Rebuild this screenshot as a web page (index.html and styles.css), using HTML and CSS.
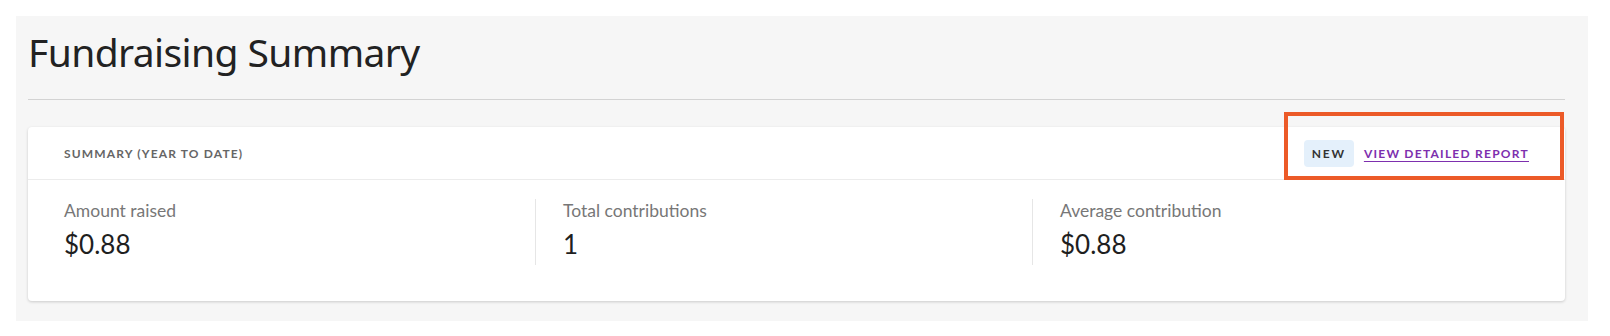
FILE: index.html
```html
<!DOCTYPE html>
<html lang="en">

<head>
    <meta charset="UTF-8" />
    <meta name="viewport" content="width=device-width, initial-scale=1.0" />
    <title>Fundraising Summary</title>
    <link rel="stylesheet" href="styles.css">
</head>

<body>
    <main class="panel">
        <header class="page-header">
            <h1>Fundraising Summary</h1>
        </header>

        <section class="card">
            <div class="card-head">
                <h2 class="card-title">Summary (year to date)</h2>
                <div class="card-actions">
                    <span class="badge">New</span>
                    <a href="#" class="report-link">View detailed report</a>
                </div>
                <div class="highlight"></div>
            </div>
            <div class="stats">
                <div class="stat">
                    <p class="stat-label">Amount raised</p>
                    <p class="stat-value">$0.88</p>
                </div>
                <div class="stat">
                    <p class="stat-label">Total contributions</p>
                    <p class="stat-value">1</p>
                </div>
                <div class="stat">
                    <p class="stat-label">Average contribution</p>
                    <p class="stat-value">$0.88</p>
                </div>
            </div>
        </section>
    </main>
</body>

</html>
```

FILE: styles.css
```css
* {
    margin: 0px;
    padding: 0px;
    box-sizing: border-box;
}

body {
    background: #fff;
    font-family: Lato, "Noto Sans", sans-serif;
    color: #1f1f1f;
}

.panel {
    margin: 16px 22px 0px 16px;
    padding: 12px 23px 20px 12px;
    background-color: #f6f6f6;
}

.page-header {
    padding-bottom: 23px;
    border-bottom: 1px solid #d3d3d3;
    margin-bottom: 27px;
}

.page-header h1 {
    font-family: "Noto Sans", Lato, sans-serif;
    font-size: 39px;
    line-height: 48px;
    font-weight: 400;
    color: #222;
    letter-spacing: -0.6px;
}

.card {
    background: #fff;
    border-radius: 4px;
    box-shadow: 0px 1px 3px rgba(0, 0, 0, 0.18);
}

.card-head {
    position: relative;
    display: flex;
    justify-content: space-between;
    align-items: center;
    height: 53px;
    padding: 0px 36px;
    border-bottom: 1px solid #ececec;
}

.card-title {
    font-size: 12px;
    font-weight: 700;
    text-transform: uppercase;
    letter-spacing: 1.15px;
    color: #666;
}

.card-actions {
    display: flex;
    align-items: center;
    gap: 10px;
}

.badge {
    display: inline-block;
    padding: 0px 8px;
    height: 27px;
    line-height: 27px;
    border-radius: 4px;
    background-color: #e4f0fb;
    font-size: 12px;
    font-weight: 700;
    letter-spacing: 1.8px;
    text-transform: uppercase;
    color: #333;
}

.report-link {
    font-size: 12px;
    font-weight: 700;
    letter-spacing: 1.25px;
    text-transform: uppercase;
    color: #7d2fae;
    text-underline-offset: 3px;
}

/* annotation box drawn over the actions */
.highlight {
    position: absolute;
    top: -15px;
    right: 1px;
    width: 280px;
    height: 68px;
    border: 4px solid #ec5a28;
    pointer-events: none;
}

.stats {
    display: grid;
    grid-template-columns: repeat(3, 1fr);
    padding: 19px 36px 36px 10px;
}

.stat {
    padding-left: 26px;
    height: 66px;
}

.stat + .stat {
    border-left: 1px solid #e6e6e6;
    padding-left: 27px;
}

.stat-label {
    font-size: 17.5px;
    line-height: 24px;
    color: #777;
}

.stat-value {
    margin-top: 5px;
    font-size: 26px;
    line-height: 32px;
    color: #1f1f1f;
}
```
